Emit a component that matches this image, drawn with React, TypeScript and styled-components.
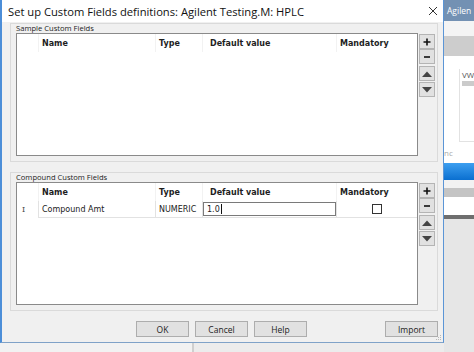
import * as React from 'react';
import styled, { createGlobalStyle } from 'styled-components';

const GlobalStyle = createGlobalStyle`
  html, body {
    margin: 0;
    padding: 0;
  }
  body {
    width: 474px;
    height: 352px;
    overflow: hidden;
    font-family: "Open Sans", "Noto Sans", sans-serif;
    color: #1a1a1a;
  }
`;

interface Field {
  name: string;
  type: string;
  value: string;
  mandatory: boolean;
}

const compoundFields: Field[] = [
  { name: 'Compound Amt', type: 'NUMERIC', value: '1.0', mandatory: false }
];

const App = () => (
  <>
    <GlobalStyle />
    <Screen>
      <DialogColumn>
        <Dialog>
          <TitleBar>
            <TitleText>Set up Custom Fields definitions: Agilent Testing.M: HPLC</TitleText>
            <CloseIcon viewBox="0 0 10 10">
              <path d="M1 1 L9 9 M9 1 L1 9" stroke="#333" strokeWidth="1" />
            </CloseIcon>
          </TitleBar>
          <Body>
            <FieldGroup title="Sample Custom Fields" fields={[]} />
            <FieldGroup title="Compound Custom Fields" fields={compoundFields} />
            <Footer>
              <DialogButton>OK</DialogButton>
              <DialogButton>Cancel</DialogButton>
              <DialogButton>Help</DialogButton>
              <Spacer />
              <DialogButton>Import</DialogButton>
            </Footer>
          </Body>
          <Grip viewBox="0 0 6 6">
            <rect x="4" y="0" width="1" height="1" fill="#b8b8b8" />
            <rect x="2" y="2" width="1" height="1" fill="#b8b8b8" />
            <rect x="4" y="2" width="1" height="1" fill="#b8b8b8" />
            <rect x="0" y="4" width="1" height="1" fill="#b8b8b8" />
            <rect x="2" y="4" width="1" height="1" fill="#b8b8b8" />
            <rect x="4" y="4" width="1" height="1" fill="#b8b8b8" />
          </Grip>
        </Dialog>
        <BelowDialog>
          <BelowLeft />
        </BelowDialog>
      </DialogColumn>
      <BackWindow>
        <BackTitle>Agilen</BackTitle>
        <BackBand $h={15} $bg="#f4f4f4" />
        <BackBand $h={20} $bg="#cdcdcd" />
        <BackContent>
          <BackPanel>
            <BackLabel>VW</BackLabel>
            <BackBar />
          </BackPanel>
          <BackHint>nc</BackHint>
        </BackContent>
        <BackBlue />
        <BackBand $h={8} $bg="#f2f2f2" />
        <BackBand $h={9} $bg="#c4c4c4" />
        <BackBand $h={18} $bg="#ffffff" />
        <BackBand $h={4} $bg="#6e6e6e" />
        <BackBand $h={140} $bg="#e6e6e6" />
      </BackWindow>
    </Screen>
  </>
);

const FieldGroup = ({ title, fields }: { title: string; fields: Field[] }) => (
  <Group>
    <GroupLabel>{title}</GroupLabel>
    <GroupContent>
      <Table>
        <HeaderCell />
        <HeaderCell>Name</HeaderCell>
        <HeaderCell>Type</HeaderCell>
        <HeaderCell $pad={7}>Default value</HeaderCell>
        <HeaderCell>Mandatory</HeaderCell>
        {fields.map((f) => (
          <React.Fragment key={f.name}>
            <RowHead>I</RowHead>
            <Cell>{f.name}</Cell>
            <Cell>{f.type}</Cell>
            <Cell $flush>
              <ValueBox>
                {f.value}
                <Caret />
              </ValueBox>
            </Cell>
            <Cell $center>
              <CheckBox />
            </Cell>
          </React.Fragment>
        ))}
      </Table>
      <SideButtons>
        <SideButton>
          <svg width="8" height="8" viewBox="0 0 8 8">
            <path d="M4 0.5 V7.5 M0.5 4 H7.5" stroke="#111" strokeWidth="1.6" />
          </svg>
        </SideButton>
        <SideButton>
          <svg width="8" height="8" viewBox="0 0 8 8">
            <path d="M1 4 H7" stroke="#111" strokeWidth="1.6" />
          </svg>
        </SideButton>
        <SideButton $gap={2}>
          <svg width="10" height="6" viewBox="0 0 10 6">
            <path d="M0 6 L5 0.5 L10 6 Z" fill="#444" />
          </svg>
        </SideButton>
        <SideButton $gap={1}>
          <svg width="10" height="6" viewBox="0 0 10 6">
            <path d="M0 0 L5 5.5 L10 0 Z" fill="#444" />
          </svg>
        </SideButton>
      </SideButtons>
    </GroupContent>
  </Group>
);

const Screen = styled.div`
  display: grid;
  grid-template-columns: 444px 30px;
  width: 474px;
  height: 352px;
  overflow: hidden;
  background: #e8e8e8;
`;

const DialogColumn = styled.div`
  display: flex;
  flex-direction: column;
`;

const Dialog = styled.div`
  position: relative;
  height: 343px;
  box-sizing: border-box;
  display: flex;
  flex-direction: column;
  background: #f0f0f0;
  border-left: 2px solid #4c8ed8;
  border-right: 1px solid #5b95d6;
  border-bottom: 1px solid #7fa2c8;
`;

const TitleBar = styled.div`
  height: 22px;
  flex: none;
  display: flex;
  align-items: center;
  justify-content: space-between;
  padding: 0 5px 0 6px;
  background: #ffffff;
`;

const TitleText = styled.span`
  font-size: 11.2px;
  color: #111;
  white-space: nowrap;
`;

const CloseIcon = styled.svg`
  width: 10px;
  height: 10px;
`;

const Body = styled.div`
  flex: 1;
  display: flex;
  flex-direction: column;
  gap: 10px;
  padding: 1px 5px 0 8px;
`;

const Group = styled.div`
  height: 139px;
  box-sizing: border-box;
  display: flex;
  flex-direction: column;
  border: 1px solid #dadada;
  padding-left: 5px;
`;

const GroupLabel = styled.div`
  height: 9px;
  font-size: 7.6px;
  line-height: 9px;
  color: #222;
  white-space: nowrap;
`;

const GroupContent = styled.div`
  display: flex;
  gap: 1px;
`;

const Table = styled.div`
  width: 402px;
  height: 123px;
  box-sizing: border-box;
  border: 1px solid #8a8a8a;
  background: #ffffff;
  display: grid;
  grid-template-columns: 21px 117px 47px 134px 1fr;
  grid-template-rows: 18px;
  grid-auto-rows: 17px;
  align-content: start;
  font-family: "DejaVu Sans", Verdana, sans-serif;
  font-size: 8px;
`;

const HeaderCell = styled.div<{ $pad?: number }>`
  display: flex;
  align-items: center;
  padding-left: ${(p) => p.$pad ?? 3}px;
  padding-top: 1px;
  font-weight: bold;
  color: #1e1e1e;
  border-left: 1px solid #f2f2f2;
  white-space: nowrap;
  &:first-child {
    border-left: none;
  }
`;

const RowHead = styled.div`
  display: flex;
  align-items: center;
  padding-left: 5px;
  font-family: "DejaVu Serif", serif;
  color: #444;
`;

const Cell = styled.div<{ $flush?: boolean; $center?: boolean }>`
  display: flex;
  align-items: center;
  justify-content: ${(p) => (p.$center ? 'center' : 'flex-start')};
  padding-left: ${(p) => (p.$flush || p.$center ? 0 : 3)}px;
  border-left: 1px solid #e2e2e2;
  border-bottom: 1px solid #e2e2e2;
  color: #222;
  white-space: nowrap;
`;

const ValueBox = styled.div`
  width: 100%;
  height: 14px;
  box-sizing: border-box;
  border: 1px solid #7a7a7a;
  display: flex;
  align-items: center;
  padding-left: 3px;
  color: #222;
`;

const Caret = styled.span`
  width: 1px;
  height: 10px;
  background: #111;
  margin-left: 1px;
`;

const CheckBox = styled.span`
  width: 10px;
  height: 10px;
  box-sizing: border-box;
  border: 1px solid #333;
  background: #fff;
`;

const SideButtons = styled.div`
  display: flex;
  flex-direction: column;
  padding-top: 1px;
`;

const SideButton = styled.div<{ $gap?: number }>`
  width: 16px;
  height: 15px;
  box-sizing: border-box;
  margin-top: ${(p) => p.$gap ?? 0}px;
  display: flex;
  align-items: center;
  justify-content: center;
  background: #e1e1e1;
  border: 1px solid #b4b4b4;
`;

const Footer = styled.div`
  display: flex;
  align-items: flex-start;
  gap: 6px;
  padding: 0 0 0 126px;
`;

const Spacer = styled.div`
  flex: 1;
`;

const DialogButton = styled.div`
  width: 53px;
  height: 16px;
  box-sizing: border-box;
  display: flex;
  align-items: center;
  justify-content: center;
  background: #e1e1e1;
  border: 1px solid #adadad;
  font-size: 8.5px;
  color: #222;
`;

const Grip = styled.svg`
  position: absolute;
  right: 1px;
  bottom: 1px;
  width: 6px;
  height: 6px;
`;

const BelowDialog = styled.div`
  flex: 1;
  display: flex;
  background: #ececec;
`;

const BelowLeft = styled.div`
  width: 192px;
  background: #f2f2f2;
  border-right: 2px solid #cfcfcf;
`;

const BackWindow = styled.div`
  display: flex;
  flex-direction: column;
  background: #e6e6e6;
  overflow: hidden;
`;

const BackTitle = styled.div`
  height: 21px;
  flex: none;
  display: flex;
  align-items: center;
  padding-left: 3px;
  background: #7391b3;
  color: #fff;
  font-size: 8.5px;
  white-space: nowrap;
  overflow: hidden;
`;

const BackBand = styled.div<{ $h: number; $bg: string }>`
  height: ${(p) => p.$h}px;
  flex: none;
  background: ${(p) => p.$bg};
`;

const BackContent = styled.div`
  height: 107px;
  flex: none;
  background: #ffffff;
  padding: 13px 0 0 15px;
  box-sizing: border-box;
  display: flex;
  flex-direction: column;
`;

const BackPanel = styled.div`
  height: 72px;
  border-left: 1px solid #e2e2e2;
  border-bottom: 1px solid #e2e2e2;
  padding-left: 2px;
`;

const BackLabel = styled.div`
  font-size: 8px;
  color: #555;
`;

const BackBar = styled.div`
  height: 5px;
  margin-top: 1px;
  background: #cbcbcb;
`;

const BackHint = styled.div`
  margin-top: 5px;
  margin-left: -15px;
  font-size: 8px;
  color: #aaa;
`;

const BackBlue = styled.div`
  height: 17px;
  flex: none;
  background: linear-gradient(#3d9ff0, #0a6fd0);
`;

export default App;
